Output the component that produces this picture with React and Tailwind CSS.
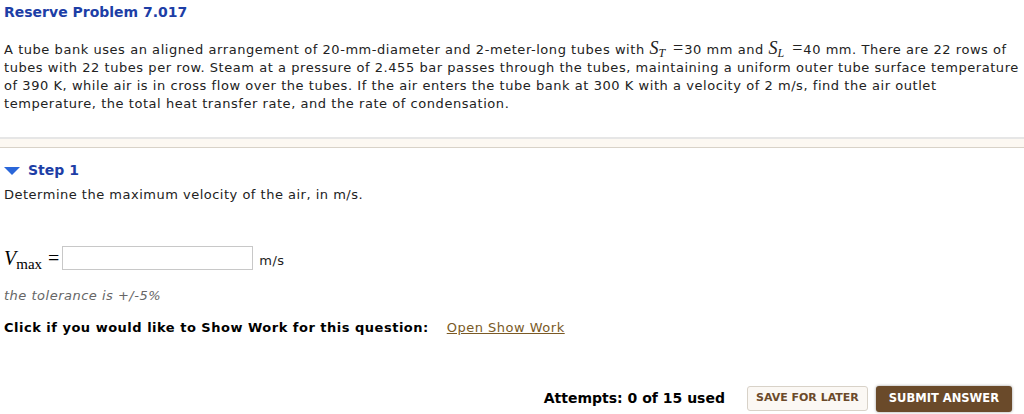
import React from "react";

const sans = { fontFamily: '"DejaVu Sans", Verdana, sans-serif' };

const MathSub = ({ base, sub }) => (
  <span className="font-['Liberation_Serif',serif] text-[18px] tracking-normal">
    <span className="italic">{base}</span>
    <sub className="text-[12px] italic">{sub}</sub>
    <span className="ml-[8px] mr-[1px]">=</span>
  </span>
);

export default function App() {
  return (
    <div className="w-[1024px] h-[414px] bg-white text-[13px] text-[#222] overflow-hidden" style={sans}>
      <div className="px-[4px] pt-[2px]">
        <h1 className="text-[14px] font-bold text-[#1d3ea6]">Reserve Problem 7.017</h1>

        <p className="mt-[16px] leading-[18px] text-[#222] tracking-[0.55px]">
          A tube bank uses an aligned arrangement of 20-mm-diameter and 2-meter-long tubes with{" "}
          <MathSub base="S" sub="T" />30 mm and <MathSub base="S" sub="L" />40 mm. There are 22 rows of
          tubes with 22 tubes per row. Steam at a pressure of 2.455 bar passes through the tubes, maintaining a
          uniform outer tube surface temperature of 390 K, while air is in cross flow over the tubes. If the air
          enters the tube bank at 300 K with a velocity of 2 m/s, find the air outlet temperature, the total heat
          transfer rate, and the rate of condensation.
        </p>
      </div>

      <div className="mt-[24px] h-[11px] border-t-2 border-[#e6e6e6] border-b border-b-[#d8d2c8] bg-[#fcf8f2]" />

      <div className="px-[4px] tracking-[0.5px]">
        <div className="mt-[12px] flex items-center gap-[8px]">
          <svg width="16" height="10" viewBox="0 0 16 10">
            <path d="M0 1 L16 1 L8 9 Z" fill="#2a66d9" />
          </svg>
          <span className="text-[14px] font-bold text-[#1d3ea6] tracking-normal">Step 1</span>
        </div>
        <div className="mt-[4px]">Determine the maximum velocity of the air, in m/s.</div>

        <div className="mt-[41px] flex items-center h-[24px]">
          <span className="font-['Liberation_Serif',serif] text-[20px] text-black flex items-baseline tracking-normal">
            <span className="italic">V</span>
            <span className="text-[15px] relative top-[4px]">max</span>
            <span className="ml-[6px]">=</span>
          </span>
          <input
            type="text"
            className="ml-[3px] w-[191px] h-[24px] border border-[#c8c8c8] bg-white outline-none"
          />
          <span className="ml-[6px] mt-[6px]">m/s</span>
        </div>

        <div className="mt-[16px] italic text-[#666]">the tolerance is +/-5%</div>

        <div className="mt-[13px] flex items-center">
          <span className="font-bold text-black">Click if you would like to Show Work for this question:</span>
          <a href="#" className="ml-[18px] text-[#7a5a26] underline">Open Show Work</a>
        </div>
      </div>

      <div className="mt-[48px] flex items-center justify-end pr-[12px]">
        <span className="text-[14px] font-bold text-black mr-[22px]">Attempts: 0 of 15 used</span>
        <button className="h-[25px] px-[8px] rounded-[3px] border border-[#d8d2c8] bg-[#fbf8f4] text-[11px] font-bold text-[#6b4a2a] mr-[8px]">
          SAVE FOR LATER
        </button>
        <button className="h-[26px] px-[13px] rounded-[3px] bg-[#6a4a2a] text-[11.5px] font-bold text-white shadow-[0_0_3px_rgba(0,0,0,0.4)]">
          SUBMIT ANSWER
        </button>
      </div>
    </div>
  );
}
